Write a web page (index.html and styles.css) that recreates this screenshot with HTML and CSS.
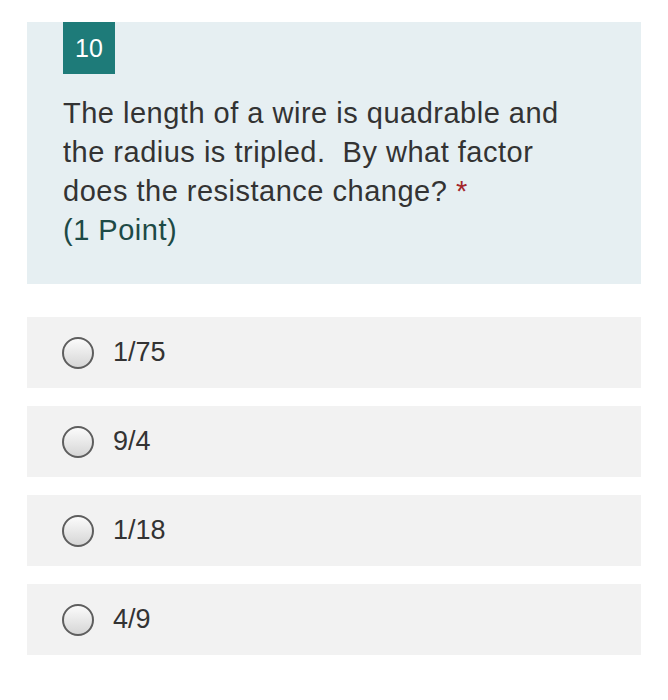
FILE: index.html
```html
<!DOCTYPE html>
<html>
<head>
<meta charset="utf-8">
<link rel="stylesheet" href="styles.css">
</head>
<body>
<div class="page">
  <div class="question">
    <div class="badge">10</div>
    <div class="qtext">The length of a wire is quadrable and the radius is tripled.&nbsp; By what factor does the resistance change? <span class="req">*</span><br><span class="points">(1 Point)</span></div>
  </div>
  <div class="options">
    <div class="option"><span class="radio"></span><span class="label">1/75</span></div>
    <div class="option"><span class="radio"></span><span class="label">9/4</span></div>
    <div class="option"><span class="radio"></span><span class="label">1/18</span></div>
    <div class="option"><span class="radio"></span><span class="label">4/9</span></div>
  </div>
</div>
</body>
</html>
```
FILE: styles.css
```css
html, body {
  margin: 0;
  padding: 0;
  background: #ffffff;
}
body {
  font-family: "Liberation Sans", Arial, sans-serif;
  color: #333333;
}
.page {
  padding: 22px 27px 0 27px;
  width: 614px;
}
.question {
  background: #e6eff2;
  padding: 0 36px 34px 36px;
}
.badge {
  width: 52px;
  height: 52px;
  background: #1e7b79;
  color: #ffffff;
  font-size: 25px;
  display: flex;
  align-items: center;
  justify-content: center;
}
.qtext {
  margin-top: 20px;
  font-size: 29px;
  letter-spacing: 0.5px;
  line-height: 39px;
  color: #333333;
}
.req {
  color: #a4262c;
}
.points {
  color: #1d4a46;
}
.options {
  margin-top: 33px;
  display: flex;
  flex-direction: column;
  gap: 18px;
}
.option {
  background: #f2f2f2;
  height: 71px;
  display: flex;
  align-items: center;
  padding-left: 35px;
  box-sizing: border-box;
}
.radio {
  width: 32px;
  height: 32px;
  box-sizing: border-box;
  border: 2px solid #5e5e5e;
  border-radius: 50%;
  background: linear-gradient(to bottom, #fbfbfb, #d6d6d6);
  flex: none;
}
.label {
  margin-left: 19px;
  font-size: 27px;
  color: #333333;
}
```
